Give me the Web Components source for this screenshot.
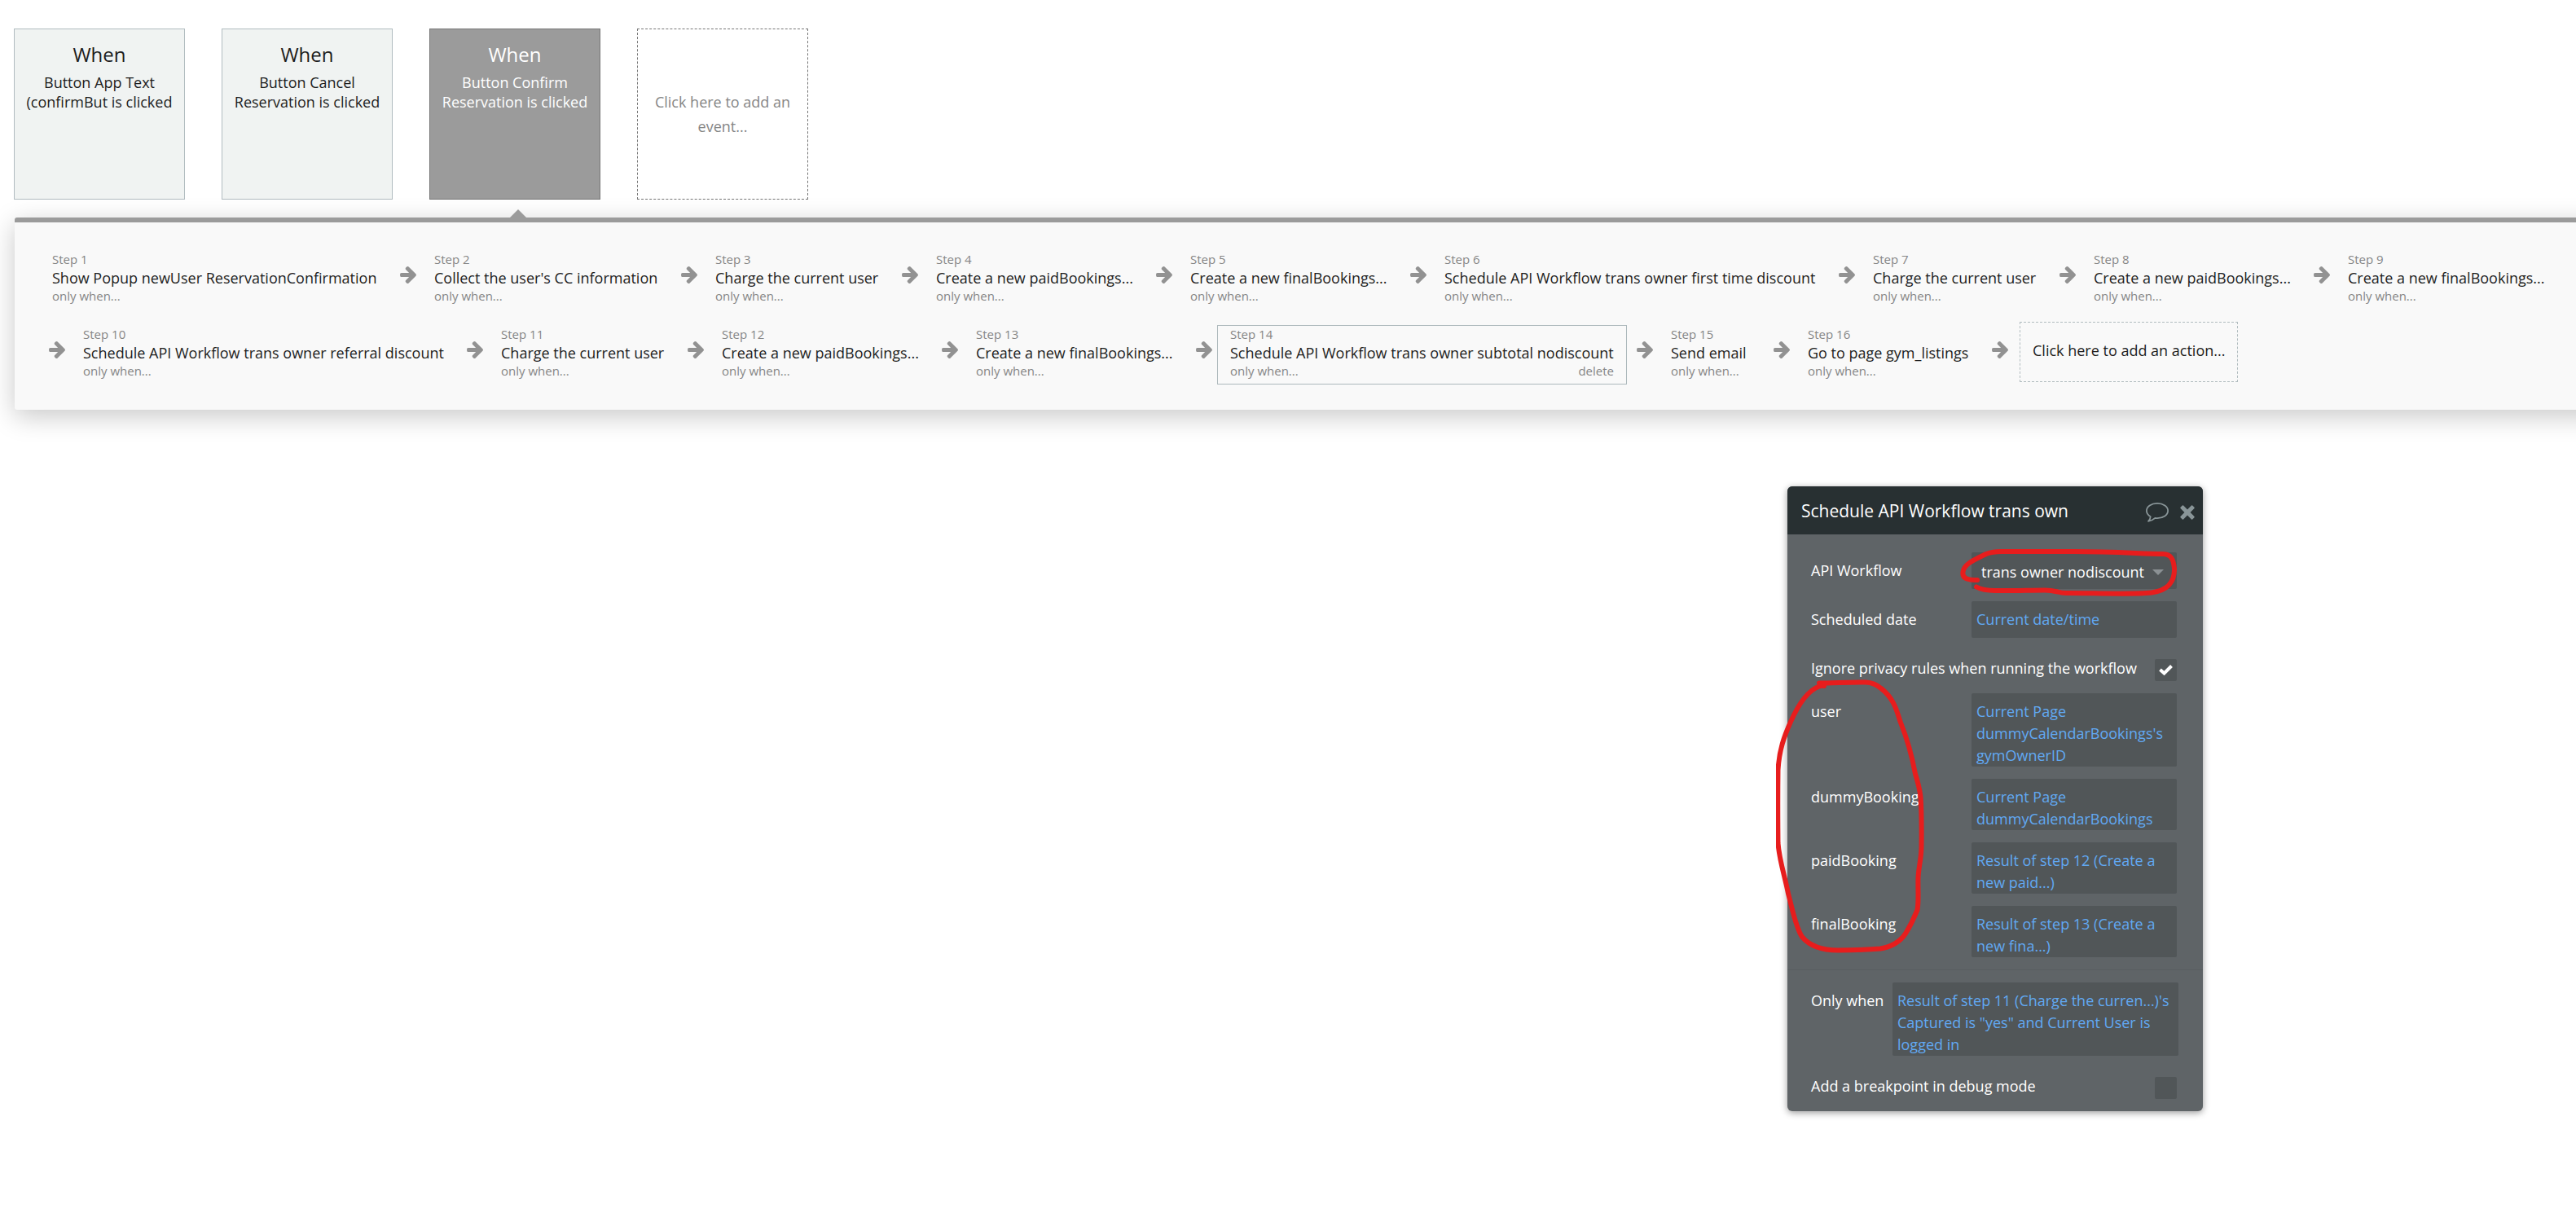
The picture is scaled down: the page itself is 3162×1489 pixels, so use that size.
<!DOCTYPE html>
<html lang="en">
<head>
<meta charset="utf-8">
<title>Workflow editor</title>
<style>
  html, body { margin: 0; min-height: 100vh; background: #fff; }
  body { font: 18px/24px "Open Sans", "Noto Sans", sans-serif; color: #1d1d1d; overflow-x: hidden; position: relative; }
</style>
</head>
<body>
<workflow-editor>
  <event-card slot="event">Button App Text (confirmBut is clicked</event-card>
  <event-card slot="event">Button Cancel Reservation is clicked</event-card>
  <event-card slot="event" selected>Button Confirm Reservation is clicked</event-card>
  <event-card slot="event" add>Click here to add an event...</event-card>

  <workflow-step number="1" first>Show Popup newUser ReservationConfirmation</workflow-step>
  <workflow-step number="2">Collect the user's CC information</workflow-step>
  <workflow-step number="3">Charge the current user</workflow-step>
  <workflow-step number="4">Create a new paidBookings...</workflow-step>
  <workflow-step number="5">Create a new finalBookings...</workflow-step>
  <workflow-step number="6">Schedule API Workflow trans owner first time discount</workflow-step>
  <workflow-step number="7">Charge the current user</workflow-step>
  <workflow-step number="8">Create a new paidBookings...</workflow-step>
  <workflow-step number="9">Create a new finalBookings...</workflow-step>
  <workflow-step number="10">Schedule API Workflow trans owner referral discount</workflow-step>
  <workflow-step number="11">Charge the current user</workflow-step>
  <workflow-step number="12">Create a new paidBookings...</workflow-step>
  <workflow-step number="13">Create a new finalBookings...</workflow-step>
  <workflow-step number="14" selected>Schedule API Workflow trans owner subtotal nodiscount</workflow-step>
  <workflow-step number="15">Send email</workflow-step>
  <workflow-step number="16">Go to page gym_listings</workflow-step>
  <add-step>Click here to add an action...</add-step>
</workflow-editor>

<property-editor caption="Schedule API Workflow trans own">
  <property-row kind="select" label="API Workflow">trans owner nodiscount</property-row>
  <property-row label="Scheduled date">Current date/time</property-row>
  <property-row kind="check" label="Ignore privacy rules when running the workflow" checked></property-row>
  <property-row label="user">Current Page dummyCalendarBookings's gymOwnerID</property-row>
  <property-row label="dummyBooking">Current Page dummyCalendarBookings</property-row>
  <property-row label="paidBooking">Result of step 12 (Create a new paid...)</property-row>
  <property-row label="finalBooking">Result of step 13 (Create a new fina...)</property-row>
  <property-row slot="condition" wide label="Only when">Result of step 11 (Charge the curren...)'s Captured is "yes" and Current User is logged in</property-row>
  <property-row slot="condition" kind="check" label="Add a breakpoint in debug mode"></property-row>
</property-editor>

<script>
const ARROW = `<svg class="arrow" viewBox="0 117 1472 1558" aria-hidden="true"><path transform="translate(1472 0) scale(-1 1)" d="M1472 960v-128q0-53-32.500-90.500t-84.500-37.500h-704l293-294q38-36 38-90t-38-90l-75-76q-37-37-90-37-52 0-91 37l-651 652q-37 37-37 90 0 52 37 91l651 650q38 38 91 38 52 0 90-38l75-74q38-38 38-91t-38-91l-293-293h704q52 0 84.500-37.500t32.500-90.500z" fill="#929292"/></svg>`;

const RESET = `
  *, *::before, *::after { box-sizing: border-box; }
  button { font: inherit; color: inherit; background: none; border: 0; border-radius: 0; padding: 0; margin: 0; cursor: pointer; }
`;

class ShadowElement extends HTMLElement {
  connectedCallback() {
    if (this.shadowRoot) return;
    this.attachShadow({ mode: 'open' }).innerHTML = `<style>${RESET}${this.styles()}</style>${this.markup()}`;
    this.ready();
  }
  ready() {}
}

customElements.define('workflow-editor', class extends ShadowElement {
  styles() { return `
    :host { display: block; padding-top: 35px; }
    .events { display: flex; gap: 45px; padding-left: 17px; }
    .panel { position: relative; margin: 22px -60px 0 18px; padding: 30px 60px 31px 30px; background: #f9f9f9;
      border-top: 6px solid #9b9b9b; border-radius: 3px; box-shadow: 0 8px 32px rgba(0,0,0,.22); }
    .panel::before { content: ""; position: absolute; left: 608px; top: -16px;
      border: 10px solid transparent; border-top: 0; border-bottom-color: #9b9b9b; }
    .steps { display: flex; flex-wrap: wrap; align-items: flex-start; row-gap: 15px; }
  `; }
  markup() { return `
    <nav class="events" aria-label="Events"><slot name="event"></slot></nav>
    <section class="panel" aria-label="Steps"><div class="steps"><slot></slot></div></section>
  `; }
});

customElements.define('event-card', class extends ShadowElement {
  styles() { return `
    :host { display: block; }
    button { display: flex; flex-direction: column; align-items: center; gap: 6px; width: 210px; height: 210px;
      padding: 14px 12px; border: 1px solid #b1bcc0; background: #f0f3f2; text-align: center; }
    strong { font-weight: 400; font-size: 24px; line-height: 33px; }
    :host([selected]) button { background: #9b9b9b; border-color: #777; color: #fff; }
    :host([add]) button { justify-content: center; background: none; border: 1px dashed #777; color: #868686; line-height: 30px; }
  `; }
  markup() { return `<button type="button">${this.hasAttribute('add') ? '' : '<strong>When</strong>'}<span><slot></slot></span></button>`; }
});

customElements.define('workflow-step', class extends ShadowElement {
  styles() { return `
    :host { display: flex; align-items: flex-start; padding-top: 4px; }
    .arrow { width: 20px; height: 21px; margin: 20px 6px 0 12px; flex: none; }
    article { flex: none; height: 73px; min-width: 130px; padding: 0 15px; border: 1px solid transparent; white-space: nowrap; }
    :host([selected]) article { border-color: #adb9bc; }
    .small { font-size: 15px; line-height: 20px; color: #868686; }
    .name { padding-top: 1px; line-height: 24px; }
    .foot { display: flex; justify-content: space-between; }
  `; }
  markup() { return `
    ${this.hasAttribute('first') ? '' : ARROW}
    <article>
      <div class="small">Step ${this.getAttribute('number')}</div>
      <div class="name"><slot></slot></div>
      <div class="small foot"><button type="button">only when...</button>${this.hasAttribute('selected') ? '<button type="button">delete</button>' : ''}</div>
    </article>
  `; }
  /* Snap each step to whole pixels so that borders and arrows stay crisp. */
  ready() {
    const box = this.shadowRoot.querySelector('article');
    box.style.width = Math.ceil(box.getBoundingClientRect().width) + 'px';
  }
});

customElements.define('add-step', class extends ShadowElement {
  styles() { return `
    :host { display: flex; align-items: flex-start; }
    .arrow { width: 20px; height: 21px; margin: 24px 14px 0 12px; flex: none; }
    .add { height: 74px; padding: 0 15px 4px; border: 1px dashed #b1bcbf; white-space: nowrap; }
  `; }
  markup() { return `${ARROW}<button class="add" type="button"><slot></slot></button>`; }
});

customElements.define('property-editor', class extends ShadowElement {
  styles() { return `
    :host { display: block; position: absolute; left: 2194px; top: 597px; width: 510px; color: #fff; }
    .window { border-radius: 6px; background: #5f6467; box-shadow: 0 2px 8px rgba(0,0,0,.4); }
    header { display: flex; align-items: center; height: 59px; padding: 0 10px 0 17px; border-radius: 6px 6px 0 0; background: #283032; }
    h2 { flex: 1; margin: 0; padding-top: 2px; font-size: 21px; line-height: 29px; font-weight: 400; }
    header button { display: flex; margin-top: 4px; }
    header button + button { margin: 4px 0 0 14px; }
    .group { display: flex; flex-direction: column; gap: 15px; padding: 15px 29px; }
    .group:first-of-type { padding-top: 22px; }
    .group + .group { border-top: 1px solid #585d60; }
    .ink { position: absolute; left: -14px; top: 73px; width: 520px; height: 510px; pointer-events: none; }
  `; }
  markup() { return `
    <section class="window">
      <header>
        <h2>${this.getAttribute('caption')}</h2>
        <button type="button" aria-label="Comment"><svg width="28" height="24" viewBox="0 0 28 24" fill="none" stroke="#899598" stroke-width="1.8" stroke-linejoin="round"><path d="M14 .9C21.300 .9 27.100 4.900 27.100 10S21.300 19.100 14 19.100Q12.600 19.100 11.400 18.900Q8 22 3 22.900Q5.500 20.300 5.700 17.200Q.9 14.300 .9 10C.9 4.900 6.700 .9 14 .9Z"/></svg></button>
        <button type="button" aria-label="Close"><svg width="18" height="18" viewBox="0 0 18 18" fill="#899598"><path d="M17.500 13.900Q18 14.500 17.500 15.200L15.200 17.500Q14.500 18 13.900 17.500L9 12.600 4.100 17.500Q3.500 18 2.800 17.500L.5 15.200Q0 14.500 .5 13.900L5.400 9 .5 4.100Q0 3.500 .5 2.800L2.800 .5Q3.500 0 4.100 .5L9 5.400 13.900 .5Q14.500 0 15.200 .5L17.500 2.800Q18 3.500 17.500 4.100L12.600 9Z"/></svg></button>
      </header>
      <div class="group"><slot></slot></div>
      <div class="group"><slot name="condition"></slot></div>
    </section>
    <svg class="ink" viewBox="2180 670 520 510" fill="none" stroke="#e71d1d" stroke-width="6" stroke-linecap="round" stroke-linejoin="round" aria-hidden="true">
      <path d="M2427 712C2418 712.500 2408 711 2409.500 702C2411 692 2424 687 2438 680Q2446 677 2457 677H2545C2600 677 2630 680 2655 680C2665 680 2668 687 2669 698C2669.500 714 2661 725 2641 727.500C2618 730 2570 728 2536 728Q2531 728 2526 726.500Q2517 724.500 2510 724.500C2490 724.500 2470 725.500 2449 725Q2434 725 2426 720.500"/>
      <path d="M2233 838.500C2250 838.500 2275 837 2290 837.500Q2301 838 2309 845C2326 858 2329 876 2333 887C2343 912 2348 934 2351 950Q2356 966 2357.500 978Q2359 1000 2358.500 1040C2358 1057 2355 1064 2354.500 1078C2354 1090 2355.500 1106 2353.500 1117Q2347 1133 2339 1146Q2329 1161 2308 1164.500Q2280 1166.500 2256 1166.500C2238 1166.500 2222 1162 2212 1150C2204 1138 2200 1115 2195 1097C2191 1076 2184 1056 2182.500 1035Q2182 985 2182.500 945C2184 920 2190 904 2198 886C2206 868 2218 848 2233 842.500Q2236 841.500 2239 842"/>
    </svg>
  `; }
});

let rowCount = 0;
customElements.define('property-row', class extends ShadowElement {
  styles() { return `
    :host { display: grid; grid-template-columns: 197px 252px; align-items: start; line-height: 27px; }
    :host([kind="check"]) { grid-template-columns: 422px 27px; }
    :host([wide]) { grid-template-columns: 100px 351px; }
    label { padding-top: 9px; white-space: nowrap; }
    .field { display: flex; align-items: flex-start; width: 100%; min-height: 45px; padding: 9px 6px 0; border-radius: 2px;
      background: #515658; color: #61a9f3; text-align: left; }
    .pick { position: relative; display: block; }
    select { appearance: none; display: block; width: 100%; height: 45px; padding: 4px 30px 0 12px; border: 0; border-radius: 2px;
      background: #515658; color: #fff; font: inherit; }
    .pick::after { content: ""; position: absolute; right: 16px; top: 21px; border: 7px solid transparent; border-bottom: 0; border-top-color: #8b9194; pointer-events: none; }
    input { appearance: none; display: grid; width: 27px; height: 27px; margin: 11px 0 0; border-radius: 2px; background: #515658; }
    .tick { position: relative; display: block; }
    .tick svg { position: absolute; left: 5px; top: 18px; pointer-events: none; }
  `; }
  markup() {
    const id = 'field-' + (++rowCount), kind = this.getAttribute('kind');
    const label = `<label for="${id}">${this.getAttribute('label')}</label>`;
    if (kind === 'select') return `${label}<span class="pick"><select id="${id}"><option>${this.textContent}</option></select></span>`;
    if (kind === 'check') {
      const on = this.hasAttribute('checked');
      return `${label}<span class="tick"><input id="${id}" type="checkbox"${on ? ' checked' : ''}>${on ? '<svg width="17" height="13" viewBox="0 0 17 13" fill="none" stroke="#fff" stroke-width="4"><path d="M1.500 6 6.500 10.500 15.500 1.500"/></svg>' : ''}</span>`;
    }
    return `${label}<button class="field" type="button" id="${id}"><span><slot></slot></span></button>`;
  }
});
</script>
</body>
</html>
